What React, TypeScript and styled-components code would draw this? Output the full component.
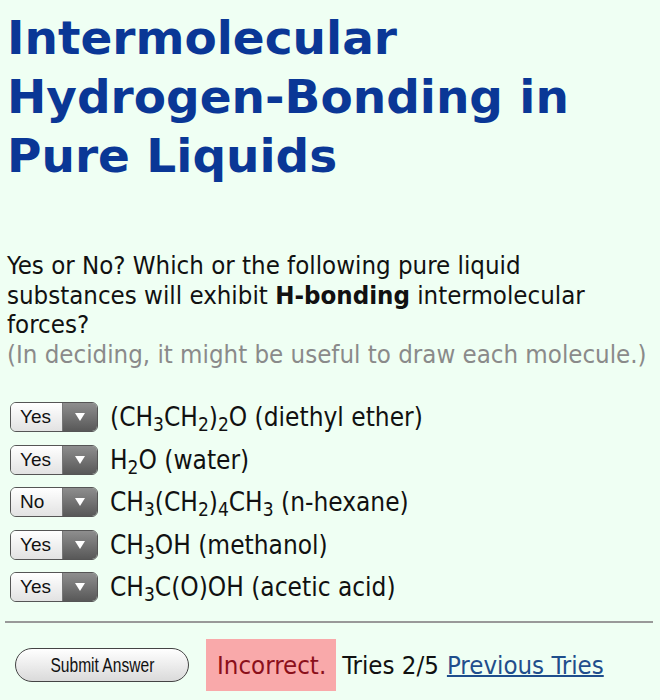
import styled, { createGlobalStyle } from 'styled-components';

const GlobalStyle = createGlobalStyle`
  html, body {
    margin: 0;
    padding: 0;
    background: #effff3;
  }
  body {
    font-family: 'DejaVu Sans Condensed', 'DejaVu Sans', Verdana, sans-serif;
    color: #111;
  }
`;

const Page = styled.div`
  padding: 0 8px 0 7px;
`;

const Title = styled.h1`
  margin: 0;
  padding-top: 8px;
  font-family: 'DejaVu Sans', Verdana, sans-serif;
  font-weight: bold;
  font-size: 47px;
  line-height: 59px;
  color: #0a3796;
`;

const Question = styled.div`
  margin-top: 66px;
  font-size: 25.6px;
  line-height: 29.6px;
  width: 620px;
`;

const Hint = styled.div`
  color: #8a8a8a;
  white-space: nowrap;
`;

const Items = styled.div`
  margin-top: 33px;
  display: flex;
  flex-direction: column;
  gap: 12.5px;
`;

const Row = styled.div`
  display: flex;
  align-items: center;
  gap: 12px;
  height: 30px;
`;

const Select = styled.div`
  margin-left: 3px;
  display: flex;
  width: 88px;
  height: 30px;
  border: 1px solid #555;
  border-radius: 6px;
  overflow: hidden;
  box-sizing: border-box;
`;

const SelectValue = styled.div`
  flex: 1;
  display: flex;
  align-items: center;
  padding-left: 9px;
  font-family: 'Liberation Sans', Arial, sans-serif;
  font-size: 19px;
  color: #111;
  background: linear-gradient(#ffffff, #e2e2e2);
`;

const SelectArrow = styled.div`
  width: 34px;
  display: flex;
  align-items: center;
  justify-content: center;
  background: linear-gradient(#8e8e8e, #585858);
  border-left: 1px solid #777;
`;

const Chem = styled.span`
  font-size: 26px;
  sub {
    font-size: 19px;
    line-height: 0;
    vertical-align: -5px;
  }
`;

const Rule = styled.hr`
  margin: 19px 0 0 -2px;
  width: 648px;
  border: none;
  border-top: 2px solid #999;
`;

const Footer = styled.div`
  margin-top: 16px;
  display: flex;
  align-items: center;
  font-size: 25.6px;
`;

const SubmitButton = styled.button`
  margin-left: 8px;
  width: 174px;
  height: 34px;
  padding: 0;
  border: 1px solid #444;
  border-radius: 17px;
  background: linear-gradient(#ffffff, #dadada);
  font-family: 'Liberation Sans', Arial, sans-serif;
  font-size: 20.5px;
  color: #111;
`;

const ButtonLabel = styled.span`
  display: inline-block;
  transform: scaleX(0.76);
`;

const Status = styled.span`
  margin-left: 17px;
  padding: 11px 10px 11px 11px;
  background: #f9a9aa;
  color: #8b0f1a;
`;

const Tries = styled.span`
  margin-left: 6px;
`;

const Link = styled.a`
  margin-left: 8px;
  color: #1f4e8c;
  text-decoration: underline;
  text-decoration-thickness: 2px;
`;

const Arrow = () => (
  <svg width="12" height="10" viewBox="0 0 12 10">
    <path d="M1 1 L11 1 L6 9 Z" fill="#fff" />
  </svg>
);

const items: { value: string; label: React.ReactNode }[] = [
  { value: 'Yes', label: <>(CH<sub>3</sub>CH<sub>2</sub>)<sub>2</sub>O (diethyl ether)</> },
  { value: 'Yes', label: <>H<sub>2</sub>O (water)</> },
  { value: 'No', label: <>CH<sub>3</sub>(CH<sub>2</sub>)<sub>4</sub>CH<sub>3</sub> (n-hexane)</> },
  { value: 'Yes', label: <>CH<sub>3</sub>OH (methanol)</> },
  { value: 'Yes', label: <>CH<sub>3</sub>C(O)OH (acetic acid)</> },
];

export default function App() {
  return (
    <>
      <GlobalStyle />
      <Page>
        <Title>
          Intermolecular
          <br />
          Hydrogen-Bonding in
          <br />
          Pure Liquids
        </Title>
        <Question>
          Yes or No? Which or the following pure liquid
          <br />
          substances will exhibit <b>H-bonding</b> intermolecular
          <br />
          forces?
          <Hint>(In deciding, it might be useful to draw each molecule.)</Hint>
        </Question>
        <Items>
          {items.map((item, i) => (
            <Row key={i}>
              <Select>
                <SelectValue>{item.value}</SelectValue>
                <SelectArrow>
                  <Arrow />
                </SelectArrow>
              </Select>
              <Chem>{item.label}</Chem>
            </Row>
          ))}
        </Items>
        <Rule />
        <Footer>
          <SubmitButton>
            <ButtonLabel>Submit Answer</ButtonLabel>
          </SubmitButton>
          <Status>Incorrect.</Status>
          <Tries>Tries 2/5</Tries>
          <Link href="#">Previous Tries</Link>
        </Footer>
      </Page>
    </>
  );
}
